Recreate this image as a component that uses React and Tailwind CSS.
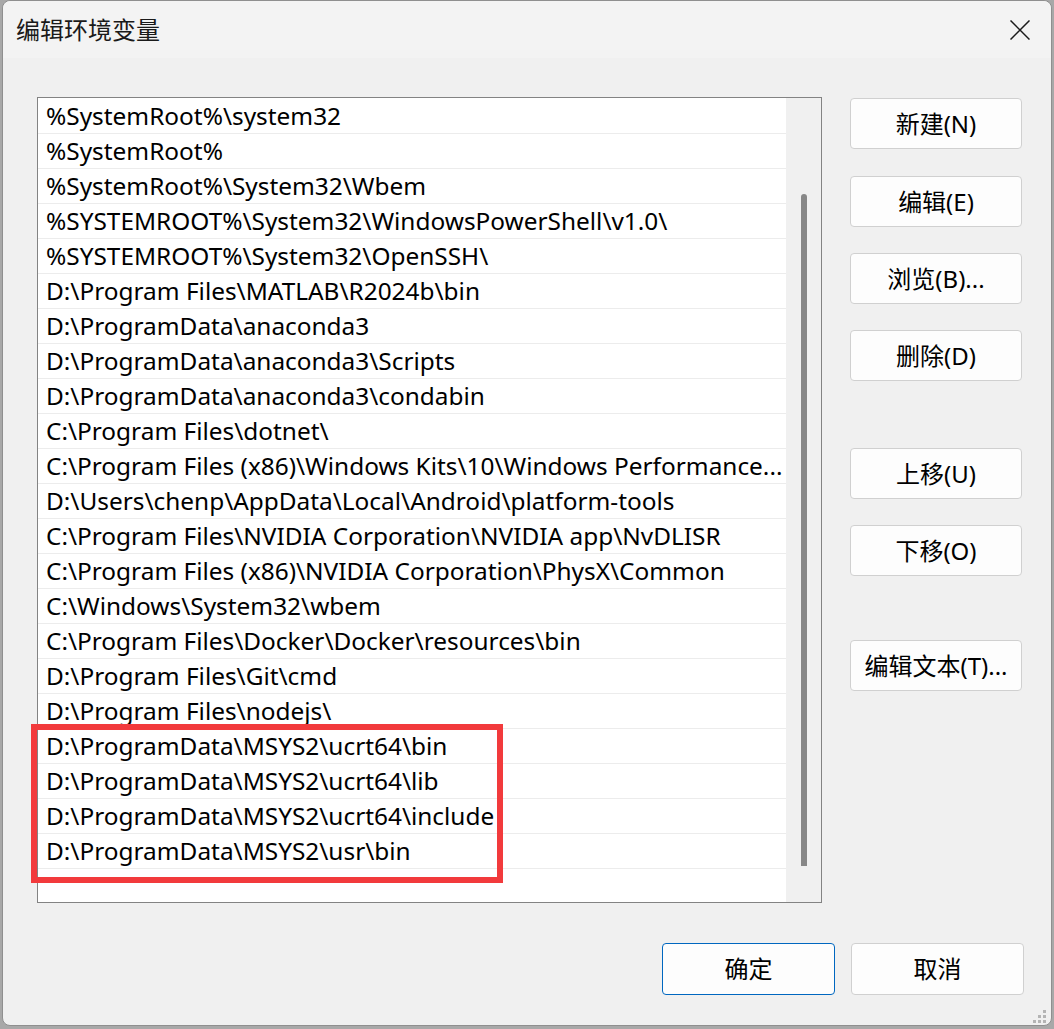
const paths = [
  "%SystemRoot%\\system32",
  "%SystemRoot%",
  "%SystemRoot%\\System32\\Wbem",
  "%SYSTEMROOT%\\System32\\WindowsPowerShell\\v1.0\\",
  "%SYSTEMROOT%\\System32\\OpenSSH\\",
  "D:\\Program Files\\MATLAB\\R2024b\\bin",
  "D:\\ProgramData\\anaconda3",
  "D:\\ProgramData\\anaconda3\\Scripts",
  "D:\\ProgramData\\anaconda3\\condabin",
  "C:\\Program Files\\dotnet\\",
  "C:\\Program Files (x86)\\Windows Kits\\10\\Windows Performance...",
  "D:\\Users\\chenp\\AppData\\Local\\Android\\platform-tools",
  "C:\\Program Files\\NVIDIA Corporation\\NVIDIA app\\NvDLISR",
  "C:\\Program Files (x86)\\NVIDIA Corporation\\PhysX\\Common",
  "C:\\Windows\\System32\\wbem",
  "C:\\Program Files\\Docker\\Docker\\resources\\bin",
  "D:\\Program Files\\Git\\cmd",
  "D:\\Program Files\\nodejs\\",
  "D:\\ProgramData\\MSYS2\\ucrt64\\bin",
  "D:\\ProgramData\\MSYS2\\ucrt64\\lib",
  "D:\\ProgramData\\MSYS2\\ucrt64\\include",
  "D:\\ProgramData\\MSYS2\\usr\\bin",
];

const font = { fontFamily: '"Noto Sans", "Noto Sans CJK SC", sans-serif' };

const SideButton = ({ label, className = "" }) => (
  <button
    type="button"
    className={`h-[51px] w-[172px] rounded-[4px] border border-[#d0d0d0] bg-[#fdfdfd] text-[24px] text-black ${className}`}
  >
    {label}
  </button>
);

const App = () => {
  return (
    <div
      className="relative h-[1029px] w-[1054px] overflow-hidden bg-[#a8a8a8] pl-[2px]"
      style={font}
    >
      <div className="flex h-[1026px] w-[1050px] flex-col rounded-[8px] border border-[#8f8f8f] bg-[#f0f0f0]">
        {/* title bar */}
        <div className="flex h-[57px] items-center justify-between rounded-t-[8px] bg-[#f3f3f3] pl-[13px] pr-[21px]">
          <span className="text-[24px] text-[#1a1a1a]">编辑环境变量</span>
          <svg width="20" height="20" viewBox="0 0 20 20" className="text-[#1a1a1a]">
            <path d="M0.5 0.5 L19.5 19.5 M19.5 0.5 L0.5 19.5" stroke="currentColor" strokeWidth="1.5" fill="none" />
          </svg>
        </div>

        <div className="ml-[34px] mt-[39px] flex">
          {/* path list */}
          <div className="flex h-[806px] w-[785px] border border-[#838383] bg-white">
            <div className="w-[748px] pt-px">
              {paths.map((p) => (
                <div
                  key={p}
                  className="h-[35px] whitespace-nowrap border-b border-[#ececec] pl-[8px] text-[24.4px] leading-[33px] text-black"
                >
                  {p}
                </div>
              ))}
            </div>
            <div className="flex w-[35px] justify-center bg-[#f0f0f0] pt-[96px]">
              <div className="h-[672px] w-[6px] rounded-t-[3px] bg-[#878787]" />
            </div>
          </div>

          {/* action buttons */}
          <div className="ml-[28px] flex flex-col pt-px">
            <SideButton label="新建(N)" />
            <SideButton label="编辑(E)" className="mt-[27px]" />
            <SideButton label="浏览(B)..." className="mt-[26px]" />
            <SideButton label="删除(D)" className="mt-[26px]" />
            <SideButton label="上移(U)" className="mt-[67px]" />
            <SideButton label="下移(O)" className="mt-[26px]" />
            <SideButton label="编辑文本(T)..." className="mt-[64px]" />
          </div>
        </div>

        <div className="mt-[40px] flex justify-end gap-[16px] pr-[27px]">
          <button
            type="button"
            className="h-[52px] w-[173px] rounded-[4px] border border-[#0067c0] bg-[#fdfdfd] text-[24px] text-black"
          >
            确定
          </button>
          <button
            type="button"
            className="h-[52px] w-[173px] rounded-[4px] border border-[#d0d0d0] bg-[#fdfdfd] text-[24px] text-black"
          >
            取消
          </button>
        </div>
      </div>

      {/* highlight around the MSYS2 entries */}
      <div className="pointer-events-none absolute left-[31px] top-[724px] h-[159px] w-[472px] border-[6px] border-[#f23a3c]" />

      {/* resize grip */}
      <div className="absolute bottom-[6px] right-[8px] grid grid-cols-3 gap-[2px]">
        <span />
        <span />
        <span className="h-[3px] w-[3px] bg-[#b4b4b4]" />
        <span />
        <span className="h-[3px] w-[3px] bg-[#b4b4b4]" />
        <span className="h-[3px] w-[3px] bg-[#b4b4b4]" />
        <span className="h-[3px] w-[3px] bg-[#b4b4b4]" />
        <span className="h-[3px] w-[3px] bg-[#b4b4b4]" />
        <span className="h-[3px] w-[3px] bg-[#b4b4b4]" />
      </div>
    </div>
  );
};

export default App;
